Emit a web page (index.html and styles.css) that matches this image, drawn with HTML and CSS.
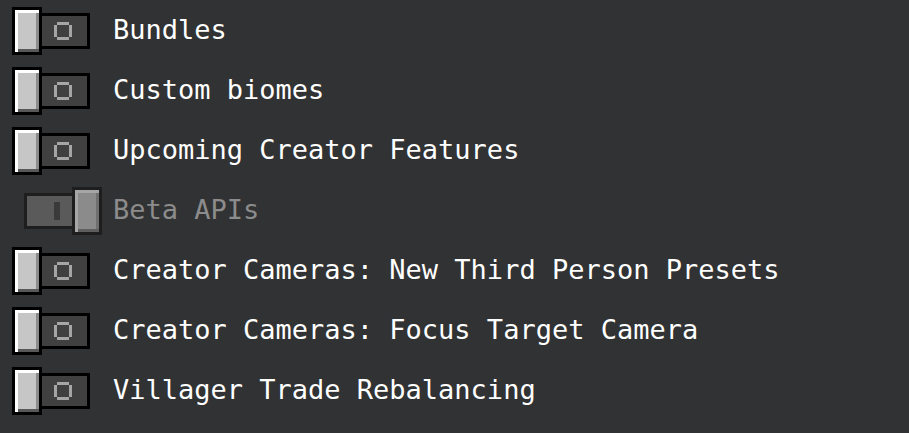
FILE: index.html
```html
<!DOCTYPE html>
<html lang="en">
<head>
    <meta charset="UTF-8">
    <meta name="viewport" content="width=device-width, initial-scale=1.0">
    <title>Experiments</title>
    <link rel="stylesheet" href="styles.css">
</head>
<body>
    <div id="experiments">
        <div class="row">
            <div class="switch">
                <span class="knob"></span>
                <span class="track"><svg class="ring" width="18" height="18" viewBox="0 0 6 6" shape-rendering="crispEdges"><path d="M1 0h4v1h-4zM0 1h1v4h-1zM5 1h1v4h-1zM1 5h4v1h-4z"/></svg></span>
            </div>
            <span class="label">Bundles</span>
        </div>
        <div class="row">
            <div class="switch">
                <span class="knob"></span>
                <span class="track"><svg class="ring" width="18" height="18" viewBox="0 0 6 6" shape-rendering="crispEdges"><path d="M1 0h4v1h-4zM0 1h1v4h-1zM5 1h1v4h-1zM1 5h4v1h-4z"/></svg></span>
            </div>
            <span class="label">Custom biomes</span>
        </div>
        <div class="row">
            <div class="switch">
                <span class="knob"></span>
                <span class="track"><svg class="ring" width="18" height="18" viewBox="0 0 6 6" shape-rendering="crispEdges"><path d="M1 0h4v1h-4zM0 1h1v4h-1zM5 1h1v4h-1zM1 5h4v1h-4z"/></svg></span>
            </div>
            <span class="label">Upcoming Creator Features</span>
        </div>
        <!-- locked on -->
        <div class="row disabled">
            <div class="switch on">
                <span class="track"><span class="bar"></span></span>
                <span class="knob"></span>
            </div>
            <span class="label">Beta APIs</span>
        </div>
        <div class="row">
            <div class="switch">
                <span class="knob"></span>
                <span class="track"><svg class="ring" width="18" height="18" viewBox="0 0 6 6" shape-rendering="crispEdges"><path d="M1 0h4v1h-4zM0 1h1v4h-1zM5 1h1v4h-1zM1 5h4v1h-4z"/></svg></span>
            </div>
            <span class="label">Creator Cameras: New Third Person Presets</span>
        </div>
        <div class="row">
            <div class="switch">
                <span class="knob"></span>
                <span class="track"><svg class="ring" width="18" height="18" viewBox="0 0 6 6" shape-rendering="crispEdges"><path d="M1 0h4v1h-4zM0 1h1v4h-1zM5 1h1v4h-1zM1 5h4v1h-4z"/></svg></span>
            </div>
            <span class="label">Creator Cameras: Focus Target Camera</span>
        </div>
        <div class="row">
            <div class="switch">
                <span class="knob"></span>
                <span class="track"><svg class="ring" width="18" height="18" viewBox="0 0 6 6" shape-rendering="crispEdges"><path d="M1 0h4v1h-4zM0 1h1v4h-1zM5 1h1v4h-1zM1 5h4v1h-4z"/></svg></span>
            </div>
            <span class="label">Villager Trade Rebalancing</span>
        </div>
    </div>
</body>
</html>
```

FILE: styles.css
```css
body {
    margin: 0;
    background-color: #313233;
    font-family: 'DejaVu Sans Mono', 'Liberation Mono', monospace;
}

#experiments {
    display: flex;
    flex-direction: column;
    gap: 12px;
    padding: 7px 0 0 12px;
}

.row {
    display: flex;
    align-items: center;
    height: 48px;
}

.switch {
    display: flex;
    align-items: center;
    width: 101px;
    flex-shrink: 0;
}

.switch.on {
    margin-left: 12px;
    width: 89px;
}

.knob {
    position: relative;
    z-index: 1;
    box-sizing: border-box;
    width: 30px;
    height: 48px;
    border: 3px solid #000;
    background-color: #c6c6c6;
    box-shadow: inset 3px 3px 0 #fff, inset 0 -3px 0 #585858, inset -3px 0 0 #8b8b8b;
}

.track {
    display: flex;
    align-items: center;
    box-sizing: border-box;
    width: 51px;
    height: 36px;
    margin-left: -3px;
    padding-left: 12px;
    border: 3px solid #000;
    background-color: #404040;
}

.ring {
    fill: #a6a6a6;
}

.switch.on .track {
    margin-left: 0;
    padding-left: 27px;
    border-color: #1e1e1f;
    background-color: #5a5a5a;
}

.switch.on .knob {
    margin-left: -3px;
    border-color: #1e1e1f;
    background-color: #8b8b8b;
    box-shadow: inset 3px 3px 0 #a6a6a6, inset 0 -3px 0 #5e5e5e, inset -3px 0 0 #707070;
}

.bar {
    width: 6px;
    height: 18px;
    background-color: #3a3a3a;
}

.label {
    color: #fff;
    font-size: 27px;
    white-space: nowrap;
    padding-bottom: 3px;
}

.disabled .label {
    color: #8c8c8c;
}
```
